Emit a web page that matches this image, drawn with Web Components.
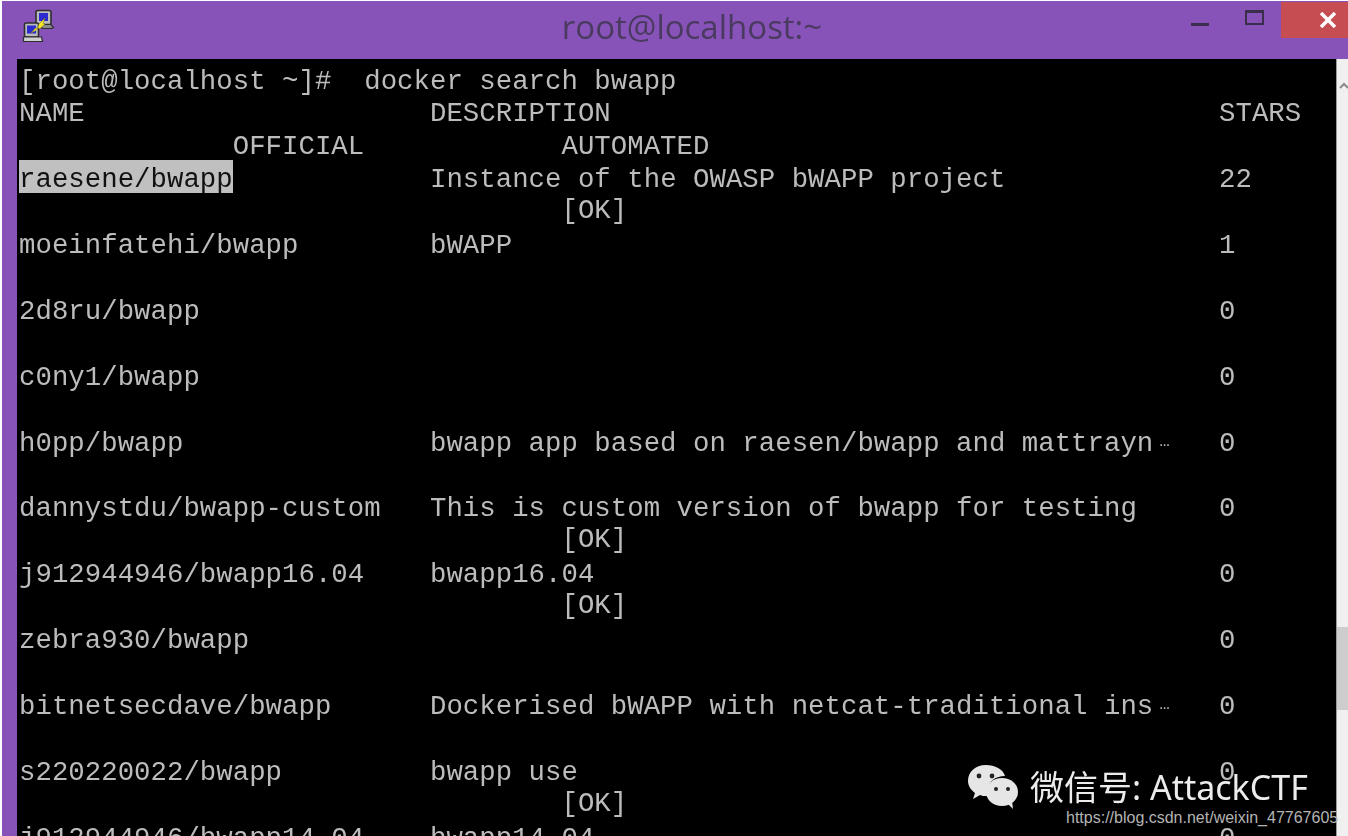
<!DOCTYPE html>
<html lang="en">
<head>
<meta charset="utf-8">
<title>root@localhost:~</title>
<style>
  html,body{margin:0;height:100%;background:#fff;overflow:hidden}
</style>
</head>
<body>
<putty-window>
  <putty-icon slot="icon"></putty-icon>
  <span slot="title">root@localhost:~</span>
  <term-screen></term-screen>
  <term-scrollbar slot="scrollbar"></term-scrollbar>
  <wechat-mark></wechat-mark>
</putty-window>

<script>
// columnas de docker search: nombre 25, descripcion 48, estrellas al final
const fila = (nombre, desc = "", stars = "") =>
  (nombre.padEnd(25) + desc.padEnd(48) + stars).trimEnd();
const OK = " ".repeat(33) + "[OK]";

const LINEAS = [
  "[root@localhost ~]#  docker search bwapp",
  fila("NAME", "DESCRIPTION", "STARS"),
  " ".repeat(13) + "OFFICIAL" + " ".repeat(12) + "AUTOMATED",
  fila("raesene/bwapp", "Instance of the OWASP bWAPP project", "22"),
  OK,
  fila("moeinfatehi/bwapp", "bWAPP", "1"),
  "",
  fila("2d8ru/bwapp", "", "0"),
  "",
  fila("c0ny1/bwapp", "", "0"),
  "",
  fila("h0pp/bwapp", "bwapp app based on raesen/bwapp and mattrayn…", "0"),
  "",
  fila("dannystdu/bwapp-custom", "This is custom version of bwapp for testing", "0"),
  OK,
  fila("j912944946/bwapp16.04", "bwapp16.04", "0"),
  OK,
  fila("zebra930/bwapp", "", "0"),
  "",
  fila("bitnetsecdave/bwapp", "Dockerised bWAPP with netcat-traditional ins…", "0"),
  "",
  fila("s220220022/bwapp", "bwapp use", "0"),
  OK,
  fila("j912944946/bwapp14.04", "bwapp14.04", "0")
];

class PuttyWindow extends HTMLElement{
  constructor(){
    super();
    this.attachShadow({mode:"open"});
    this.shadowRoot.innerHTML = `
      <style>
        :host{
          display:grid;
          grid-template-rows:58px 1fr;
          position:relative;
          width:1346px;
          height:835px;
          margin-top:1px;
          margin-left:2px;
          background:#8753b9;
          overflow:hidden
        }
        .barra{
          display:flex;
          align-items:flex-start;
          position:relative
        }
        .icono{
          width:34px;
          margin:8px 0 0 20px
        }
        .titulo{
          flex:1;
          text-align:center;
          padding:7px 0 0 0;
          margin-left:-54px;
          margin-right:-34px;
          font:33px/38px "Open Sans","Liberation Sans",sans-serif;
          color:#4a3a60;
          filter:blur(.6px)
        }
        .controles{
          position:absolute;
          right:0;
          top:1px;
          display:flex;
          align-items:flex-start
        }
        .min{
          width:18px;
          height:3px;
          margin:21px 36px 0 0;
          background:#3b2d4c;
          filter:blur(.5px)
        }
        .max{
          width:15px;
          height:10px;
          margin:8px 17px 0 0;
          border:2px solid #3b2d4c;
          border-top-width:3px;
          filter:blur(.5px)
        }
        .cerrar{
          width:67px;
          height:36px;
          background:#c64d52;
          display:flex;
          align-items:center;
          justify-content:flex-end;
          padding-right:10px;
          box-sizing:border-box
        }
        .cuerpo{
          display:grid;
          grid-template-columns:1fr 12px;
          padding-left:15px;
          min-height:0
        }
      </style>
      <div class="barra">
        <div class="icono"><slot name="icon"></slot></div>
        <div class="titulo"><slot name="title"></slot></div>
        <div class="controles">
          <div class="min"></div>
          <div class="max"></div>
          <div class="cerrar">
            <svg width="20" height="20" viewBox="0 0 20 20" style="filter:blur(.4px)"><path d="M3 3l14 14M17 3L3 17" stroke="#fff" stroke-width="3.4" fill="none"/></svg>
          </div>
        </div>
      </div>
      <div class="cuerpo">
        <slot></slot>
        <slot name="scrollbar"></slot>
      </div>
    `;
  }
}
customElements.define("putty-window", PuttyWindow);

class PuttyIcon extends HTMLElement{
  constructor(){
    super();
    this.attachShadow({mode:"open"});
    this.shadowRoot.innerHTML = `
      <style>:host{display:block;width:34px;height:34px}svg{display:block;filter:blur(.5px)}</style>
      <svg width="34" height="34" viewBox="0 0 34 34">
        <rect x="14" y="1.5" width="15" height="14" rx="1.5" fill="#bcbcbc" stroke="#2e2e2e" stroke-width="1.6"/>
        <rect x="17" y="4" width="9" height="8" fill="#2b2bd0"/>
        <path d="M19 15.500h10l2.500 3-2 1H20z" fill="#8a8a8a" stroke="#2e2e2e" stroke-width="1.2"/>
        <rect x="2.500" y="14" width="14" height="14" rx="1.500" fill="#bcbcbc" stroke="#2e2e2e" stroke-width="1.6"/>
        <rect x="5" y="16.500" width="9" height="8" fill="#2b2bd0"/>
        <path d="M1.500 28h18l1 4.500H1.500z" fill="#cfcfcf" stroke="#2e2e2e" stroke-width="1.2"/>
        <path d="M9 24l4.500-5 2 .5L17 15l6-6-2 5.500 2 .5-5 4.500-2-.5-2 2.500z" fill="#f8e92a" stroke="#7a7410" stroke-width=".5"/>
      </svg>
    `;
  }
}
customElements.define("putty-icon", PuttyIcon);

class TermScreen extends HTMLElement{
  constructor(){
    super();
    this.attachShadow({mode:"open"});
  }

  connectedCallback(){
    const filas = LINEAS.map(l=>{
      let t = l.replace("raesene/bwapp",'<span class="sel">raesene/bwapp</span>');
      t = t.replace("…",'<span class="pp">…</span>');
      const clase = l === OK ? "fila ok" : "fila";
      return `<div class="${clase}">${t||" "}</div>`;
    }).join("");
    this.shadowRoot.innerHTML = `
      <style>
        :host{
          display:block;
          background:#000;
          overflow:hidden;
          min-width:0;
          padding:6.5px 0 0 2px
        }
        .fila{
          height:32.93px;
          font:27.35px/32.85px "Liberation Mono",monospace;
          letter-spacing:.03px;
          white-space:pre;
          color:#bcbcbc;
          filter:blur(.6px)
        }
        .ok{
          transform:translateY(-2px)
        }
        .sel{
          position:relative;
          isolation:isolate;
          color:#111
        }
        .sel::before{
          content:"";
          position:absolute;
          z-index:-1;
          left:0;
          right:0;
          top:-4px;
          height:33px;
          background:#c0c0c0
        }
        .pp{
          display:inline-block;
          width:16.44px;
          font-size:17px;
          line-height:1;
          vertical-align:5px;
          text-align:right
        }
      </style>
      ${filas}
    `;
  }
}
customElements.define("term-screen", TermScreen);

class TermScrollbar extends HTMLElement{
  constructor(){
    super();
    this.attachShadow({mode:"open"});
    this.shadowRoot.innerHTML = `
      <style>
        :host{
          display:flex;
          flex-direction:column;
          background:#f0f0f0;
          border-left:1px solid #9a9a9a;
          box-sizing:border-box
        }
        .flecha{
          height:568px;
          padding-top:17px;
          box-sizing:border-box
        }
        .pulgar{
          height:83px;
          background:#cdcdcd
        }
      </style>
      <div class="flecha">
        <svg width="11" height="8" viewBox="0 0 11 8"><path d="M3 6l4-4 4 4" stroke="#8a8a8a" stroke-width="2" fill="none"/></svg>
      </div>
      <div class="pulgar"></div>
    `;
  }
}
customElements.define("term-scrollbar", TermScrollbar);

// marca de agua encima de la terminal
class WechatMark extends HTMLElement{
  constructor(){
    super();
    this.attachShadow({mode:"open"});
    this.shadowRoot.innerHTML = `
      <style>
        :host{
          position:absolute;
          left:964px;
          top:760px;
          width:380px;
          height:76px;
          display:block
        }
        .marca{
          display:flex;
          align-items:center;
          gap:10px;
          height:52px;
          color:#ececec;
          filter:blur(.5px)
        }
        .texto{
          font:34px/40px "Noto Sans","Noto Sans CJK SC",sans-serif;
          white-space:pre
        }
        .url{
          position:absolute;
          left:100px;
          top:47px;
          font:16px/20px "Liberation Sans",sans-serif;
          color:#b4b4b4;
          white-space:pre
        }
      </style>
      <div class="marca">
        <svg width="54" height="48" viewBox="0 0 54 48">
          <path d="M20 2C9 2 2 9 2 18c0 5 3 9 7 12l-2 6 7-4c2 1 4 1 6 1h3c-1-2-1-4-1-6 0-9 8-14 17-14C37 6 29 2 20 2z" fill="#e6e6e6"/>
          <ellipse cx="36" cy="29" rx="16" ry="14" fill="#e6e6e6"/>
          <path d="M41 40l6 6-1-8z" fill="#e6e6e6"/>
          <circle cx="13" cy="13" r="2.4" fill="#222"/><circle cx="26" cy="13" r="2.4" fill="#222"/>
          <circle cx="30" cy="26" r="2" fill="#222"/><circle cx="42" cy="26" r="2" fill="#222"/>
        </svg>
        <span class="texto">微信号: AttackCTF</span>
      </div>
      <div class="url">https://blog.csdn.net/weixin_47767605</div>
    `;
  }
}
customElements.define("wechat-mark", WechatMark);
</script>
</body>
</html>
